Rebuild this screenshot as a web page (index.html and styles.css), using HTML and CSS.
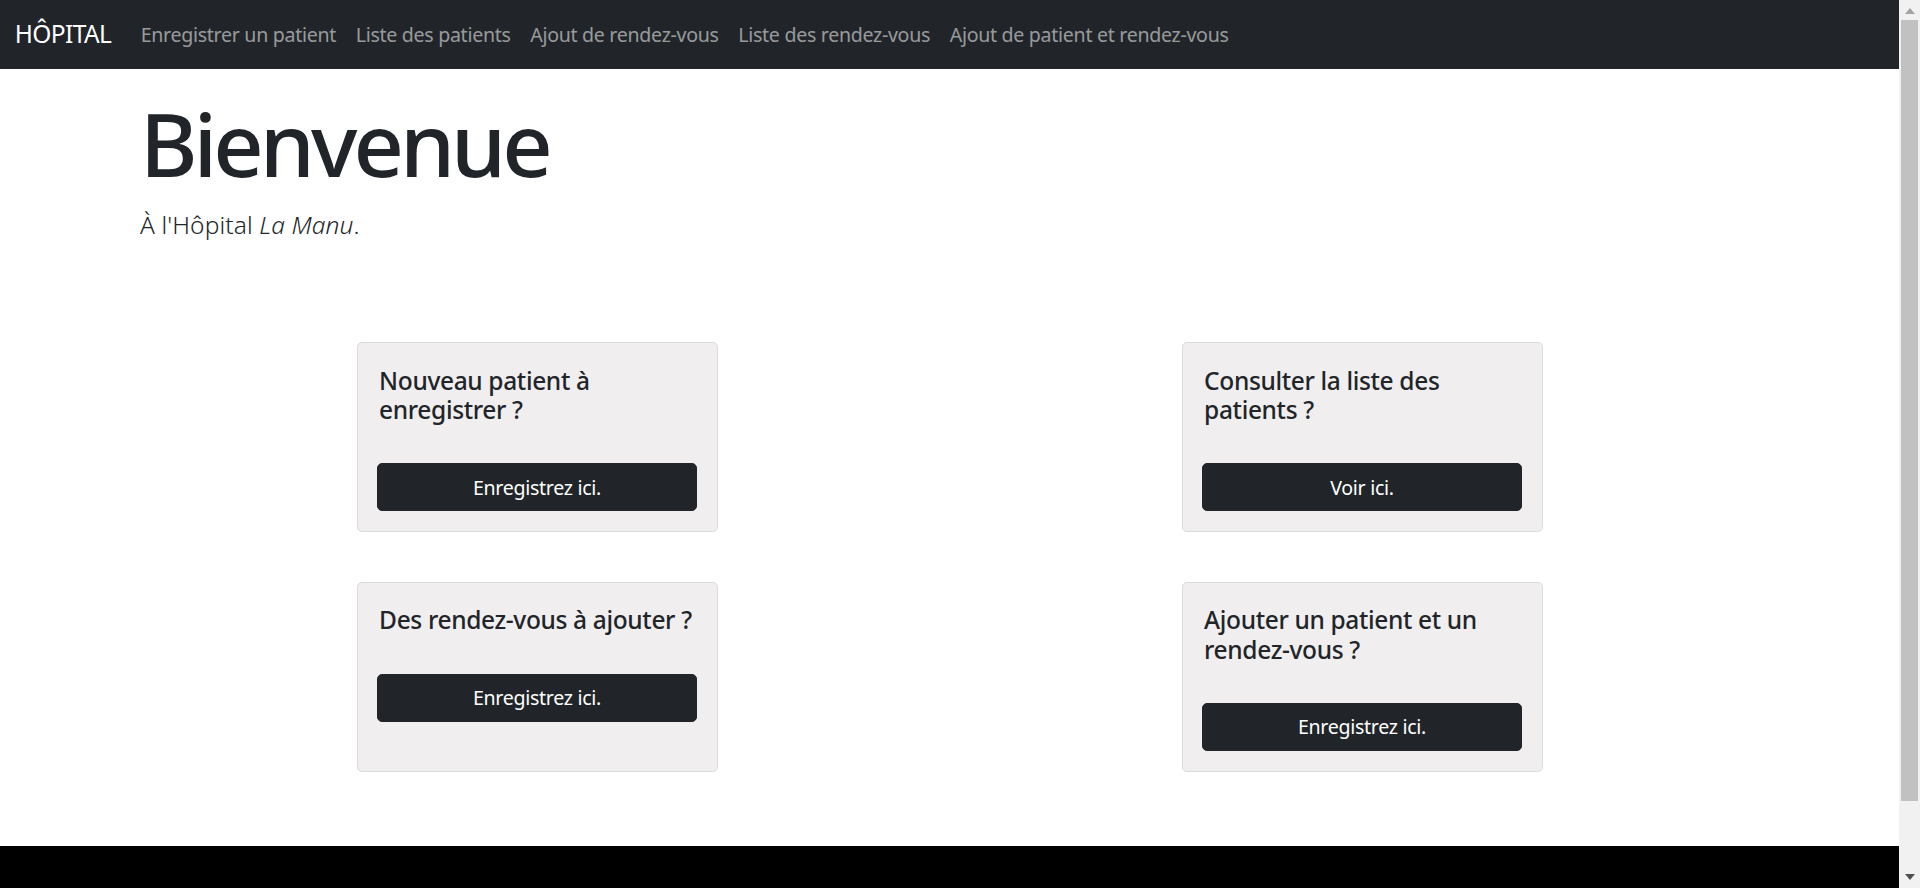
FILE: index.html
```html
<!DOCTYPE html>
<html lang="fr">
<head>
<meta charset="utf-8">
<title>Hôpital La Manu</title>
<link rel="stylesheet" href="styles.css">
</head>
<body>
<nav class="navbar">
  <a class="brand" href="#">HÔPITAL</a>
  <ul class="nav">
    <li><a class="nav-link" href="#">Enregistrer un patient</a></li>
    <li><a class="nav-link" href="#">Liste des patients</a></li>
    <li><a class="nav-link" href="#">Ajout de rendez-vous</a></li>
    <li><a class="nav-link" href="#">Liste des rendez-vous</a></li>
    <li><a class="nav-link" href="#">Ajout de patient et rendez-vous</a></li>
  </ul>
</nav>
<main>
  <section class="hero">
    <h1 class="hero-title">Bienvenue</h1>
    <p class="lead">À l'Hôpital <em>La Manu</em>.</p>
  </section>
  <section class="cards">
    <div class="card">
      <h5 class="card-title">Nouveau patient à enregistrer ?</h5>
      <a class="btn" href="#">Enregistrez ici.</a>
    </div>
    <div class="card">
      <h5 class="card-title">Consulter la liste des patients ?</h5>
      <a class="btn" href="#">Voir ici.</a>
    </div>
    <div class="card">
      <h5 class="card-title">Des rendez-vous à ajouter ?</h5>
      <a class="btn" href="#">Enregistrez ici.</a>
    </div>
    <div class="card">
      <h5 class="card-title">Ajouter un patient et un rendez-vous ?</h5>
      <a class="btn" href="#">Enregistrez ici.</a>
    </div>
  </section>
</main>
<footer class="footer"></footer>
<div class="scrollbar" aria-hidden="true">
  <span class="sb-arrow sb-up"></span>
  <span class="sb-thumb"></span>
  <span class="sb-track"></span>
  <span class="sb-arrow sb-down"></span>
</div>
</body>
</html>
```
FILE: styles.css
```css
* { box-sizing: border-box; }
html, body { margin: 0; padding: 0; }
body {
  font-family: "Noto Sans", "Open Sans", "DejaVu Sans", sans-serif;
  font-size: 19.6px;
  line-height: 1.5;
  color: #212529;
  background: #fff;
  padding-right: 21px;
}
a { text-decoration: none; }

.navbar {
  display: flex;
  align-items: center;
  height: 69px;
  padding: 0 14.7px;
  background: #212529;
}
.brand {
  font-size: 24.5px;
  line-height: 1.5;
  color: #fff;
  margin-right: 19.6px;
  letter-spacing: -0.6px;
}
.nav {
  display: flex;
  list-style: none;
  margin: 0;
  padding: 0;
}
.nav-link {
  display: block;
  padding: 9.8px;
  color: rgba(255, 255, 255, 0.55);
  letter-spacing: -0.3px;
}

.hero {
  padding: 22px 140px 0;
}
.hero-title {
  margin: 0 0 10px;
  font-size: 88px;
  font-weight: 500;
  line-height: 1.2;
  letter-spacing: -4px;
}
.lead {
  margin: 0;
  font-size: 24.5px;
  font-weight: 300;
  letter-spacing: 0.1px;
}

.cards {
  display: grid;
  grid-template-columns: 1fr 1fr;
  justify-items: center;
  row-gap: 50px;
  max-width: 1650px;
  margin: 99px auto 0;
  padding-bottom: 74px;
}
.card {
  display: flex;
  flex-direction: column;
  width: 361px;
  padding: 19.6px;
  background: #f0eeef;
  border: 1px solid #dcdbdc;
  border-radius: 5px;
}
.card-title {
  margin: 0 0 39px;
  padding: 2.6px 0 0 2px;
  font-size: 24.5px;
  font-weight: 500;
  line-height: 1.2;
  letter-spacing: -0.35px;
}
.btn {
  display: block;
  padding: 8.4px 14.7px;
  font-size: 19.6px;
  line-height: 1.5;
  text-align: center;
  color: #fff;
  background: #212529;
  border: 1px solid #212529;
  border-radius: 5px;
  letter-spacing: -0.3px;
}

.footer {
  height: 118px;
  background: #000;
}

.scrollbar {
  position: fixed;
  top: 0;
  right: 0;
  bottom: 0;
  width: 21px;
  display: flex;
  flex-direction: column;
  align-items: center;
  background: #f1f1f1;
}
.sb-arrow {
  width: 0;
  height: 0;
  border-left: 5px solid transparent;
  border-right: 5px solid transparent;
}
.sb-up {
  margin: 8px 0 6px;
  border-bottom: 6px solid #a3a3a3;
}
.sb-down {
  margin: 6px 0 8px;
  border-top: 6px solid #505050;
}
.sb-thumb {
  width: 17px;
  height: 781px;
  background: #c1c1c1;
}
.sb-track { flex: 1; }
```
